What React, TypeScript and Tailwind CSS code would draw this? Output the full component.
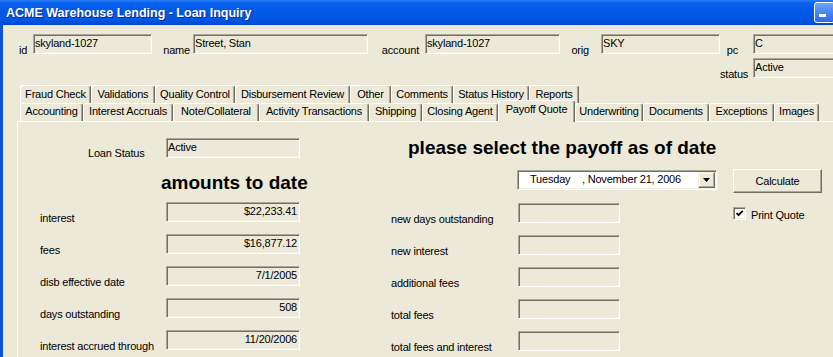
import React from "react"

type Tab = { label: string; w: string; active?: boolean }

const tabsBack: Tab[] = [
  { label: "Fraud Check", w: "w-[71px]" },
  { label: "Validations", w: "w-[64px]" },
  { label: "Quality Control", w: "w-[80px]" },
  { label: "Disbursement Review", w: "w-[115px]" },
  { label: "Other", w: "w-[41px]" },
  { label: "Comments", w: "w-[62px]" },
  { label: "Status History", w: "w-[76px]" },
  { label: "Reports", w: "w-[50px]" },
]

const tabsFront: Tab[] = [
  { label: "Accounting", w: "w-[63px]" },
  { label: "Interest Accruals", w: "w-[90px]" },
  { label: "Note/Collateral", w: "w-[86px]" },
  { label: "Activity Transactions", w: "w-[110px]" },
  { label: "Shipping", w: "w-[53px]" },
  { label: "Closing Agent", w: "w-[76px]" },
  { label: "Payoff Quote", w: "w-[77px]", active: true },
  { label: "Underwriting", w: "w-[68px]" },
  { label: "Documents", w: "w-[66px]" },
  { label: "Exceptions", w: "w-[65px]" },
  { label: "Images", w: "w-[45px]" },
]

const amounts = [
  { label: "interest", value: "$22,233.41" },
  { label: "fees", value: "$16,877.12" },
  { label: "disb effective date", value: "7/1/2005" },
  { label: "days outstanding", value: "508" },
  { label: "interest accrued through", value: "11/20/2006" },
]

const payoff = ["new days outstanding", "new interest", "additional fees", "total fees", "total fees and interest"]

function Field({ className = "", children }: { className?: string; children?: React.ReactNode }) {
  return (
    <div
      className={`h-[20px] shrink-0 overflow-hidden whitespace-nowrap border border-t-[#aca899] border-l-[#aca899] border-r-white border-b-white pt-[2px] leading-[13px] shadow-[inset_1px_1px_0_#716f64,inset_-1px_-1px_0_#f1efe2] ${className}`}
    >
      {children}
    </div>
  )
}

function TabRow({ tabs, first }: { tabs: Tab[]; first?: boolean }) {
  return (
    <div className="flex h-[18px] pl-[17px]">
      {tabs.map((t) =>
        t.active ? (
          <div
            key={t.label}
            className={`${t.w} relative z-10 -mt-[3px] h-[22px] shrink-0 flex justify-center rounded-t-[3px] border-t border-l border-white border-r border-r-[#716f64] bg-[#ece9d8] pt-[2px] leading-[13px] shadow-[inset_-1px_0_0_#aca899]`}
          >
            {t.label}
          </div>
        ) : (
          <div
            key={t.label}
            className={`${t.w} h-[18px] shrink-0 flex justify-center rounded-t-[3px] border-t border-l border-white border-r border-r-[#716f64] leading-[13px] shadow-[inset_-1px_0_0_#aca899] ${first ? "pt-[2px]" : "pt-[1px]"}`}
          >
            {t.label}
          </div>
        )
      )}
    </div>
  )
}

export default function App() {
  return (
    <div className="w-[833px] h-[357px] overflow-hidden bg-[#ece9d8] font-['Liberation_Sans',Arial,sans-serif] text-[11px] tracking-[-0.2px] text-black">
      {/* title bar */}
      <div className="h-[25px] flex items-center justify-between pl-[6px] bg-[linear-gradient(180deg,#2b7bf5_0%,#0862ef_12%,#0058e6_50%,#0054e0_85%,#0047cf_100%)]">
        <span className="mt-[1px] text-[12.5px] font-bold tracking-normal text-white [text-shadow:1px_1px_0_#0c2a8e]">
          ACME Warehouse Lending - Loan Inquiry
        </span>
        <div className="-mr-[2px] w-[21px] h-[21px] shrink-0 flex items-end pl-[4px] pb-[5px] rounded-[3px] border border-white bg-[linear-gradient(180deg,#6aa5fa,#2b6ae6)]">
          <div className="w-[7px] h-[3px] bg-white" />
        </div>
      </div>

      {/* window body */}
      <div className="h-[332px] flex flex-col border-l-[3px] border-l-[#0c52dc]">
        {/* header fields */}
        <div className="pt-[9px]">
          <div className="h-[20px] flex items-start pl-[16px]">
            <div className="w-[14px] shrink-0 pt-[10px] leading-[13px]">id</div>
            <Field className="w-[119px] px-[1px]">skyland-1027</Field>
            <div className="w-[41px] shrink-0 pt-[10px] pr-[3px] text-right leading-[13px]">name</div>
            <Field className="w-[175px] px-[1px]">Street, Stan</Field>
            <div className="w-[57px] shrink-0 pt-[10px] pr-[6px] text-right leading-[13px]">account</div>
            <Field className="w-[135px] px-[1px]">skyland-1027</Field>
            <div className="w-[41px] shrink-0 pt-[10px] pr-[12px] text-right leading-[13px]">orig</div>
            <Field className="w-[119px] px-[1px]">SKY</Field>
            <div className="w-[33px] shrink-0 pt-[10px] pr-[15px] text-right leading-[13px]">pc</div>
            <Field className="w-[90px] px-[1px]">C</Field>
          </div>
          <div className="mt-[4px] h-[20px] flex items-start pl-[717px]">
            <div className="w-[33px] shrink-0 pt-[10px] pr-[7px] text-right leading-[13px]">status</div>
            <Field className="w-[90px] px-[1px]">Active</Field>
          </div>
        </div>

        {/* tabs */}
        <div className="mt-[7px]">
          <TabRow tabs={tabsBack} first />
          <TabRow tabs={tabsFront} />
        </div>

        {/* tab panel */}
        <div className="ml-[14px] flex-1 flex border-t border-l border-white">
          {/* left column */}
          <div className="w-[363px] shrink-0 flex flex-col">
            <div className="mt-[16px] h-[20px] flex items-start">
              <div className="w-[148px] shrink-0 pl-[70px] pt-[9px] leading-[13px]">Loan Status</div>
              <Field className="w-[134px] px-[1px]">Active</Field>
            </div>
            <div className="mt-[14px] pl-[143px] text-[19px] font-bold leading-[22px] tracking-normal">amounts to date</div>
            <div className="mt-[8px] flex flex-col gap-[12px]">
              {amounts.map((a) => (
                <div key={a.label} className="h-[20px] flex items-start">
                  <div className="w-[148px] shrink-0 pl-[22px] pt-[10px] leading-[13px]">{a.label}</div>
                  <Field className="w-[134px] pr-[2px] text-right">{a.value}</Field>
                </div>
              ))}
            </div>
          </div>

          {/* right column */}
          <div className="flex-1 flex flex-col">
            <div className="mt-[15px] pl-[27px] text-[19px] font-bold leading-[22px] tracking-normal whitespace-nowrap">
              please select the payoff as of date
            </div>
            <div className="mt-[10px] h-[24px] flex items-start pl-[136px]">
              <div className="mt-[1px] w-[200px] h-[20px] shrink-0 flex items-start border border-t-[#aca899] border-l-[#aca899] border-r-white border-b-white bg-white shadow-[inset_1px_1px_0_#716f64,inset_-1px_-1px_0_#f1efe2]">
                <span className="pl-[12px] pt-[2px] leading-[13px] whitespace-nowrap">
                  <span className="inline-block w-[52px]">Tuesday</span>, November 21, 2006
                </span>
                <div className="ml-auto mt-[1px] mr-[1px] w-[17px] h-[16px] shrink-0 flex items-center justify-center border border-t-[#f1efe2] border-l-[#f1efe2] border-r-[#716f64] border-b-[#716f64] bg-[#ece9d8] shadow-[inset_-1px_-1px_0_#aca899,inset_1px_1px_0_#ffffff]">
                  <svg width="7" height="4" viewBox="0 0 7 4">
                    <polygon points="0,0 7,0 3.5,4" fill="#000" />
                  </svg>
                </div>
              </div>
              <div className="ml-[16px] w-[89px] h-[24px] shrink-0 flex items-center justify-center border border-t-white border-l-white border-r-[#716f64] border-b-[#716f64] bg-[#ece9d8] shadow-[inset_-1px_-1px_0_#aca899] leading-[13px]">
                Calculate
              </div>
            </div>
            <div className="mt-[10px] flex flex-col gap-[12px]">
              {payoff.map((p, i) => (
                <div key={p} className="h-[20px] flex items-start">
                  <div className="w-[137px] shrink-0 pl-[10px] pt-[10px] leading-[13px] whitespace-nowrap">{p}</div>
                  <Field className="w-[102px]" />
                  {i === 0 && (
                    <div className="ml-[113px] mt-[4px] flex items-start">
                      <div className="w-[13px] h-[13px] shrink-0 flex items-center justify-center border border-t-[#aca899] border-l-[#aca899] border-r-white border-b-white bg-white shadow-[inset_1px_1px_0_#716f64,inset_-1px_-1px_0_#f1efe2]">
                        <svg width="9" height="9" viewBox="0 0 9 9">
                          <polyline points="1.5,4 3.5,6.2 7.8,1.8" fill="none" stroke="#000" strokeWidth="1.8" />
                        </svg>
                      </div>
                      <span className="ml-[5px] pt-[2px] leading-[13px] whitespace-nowrap">Print Quote</span>
                    </div>
                  )}
                </div>
              ))}
            </div>
          </div>
        </div>
      </div>
    </div>
  )
}
